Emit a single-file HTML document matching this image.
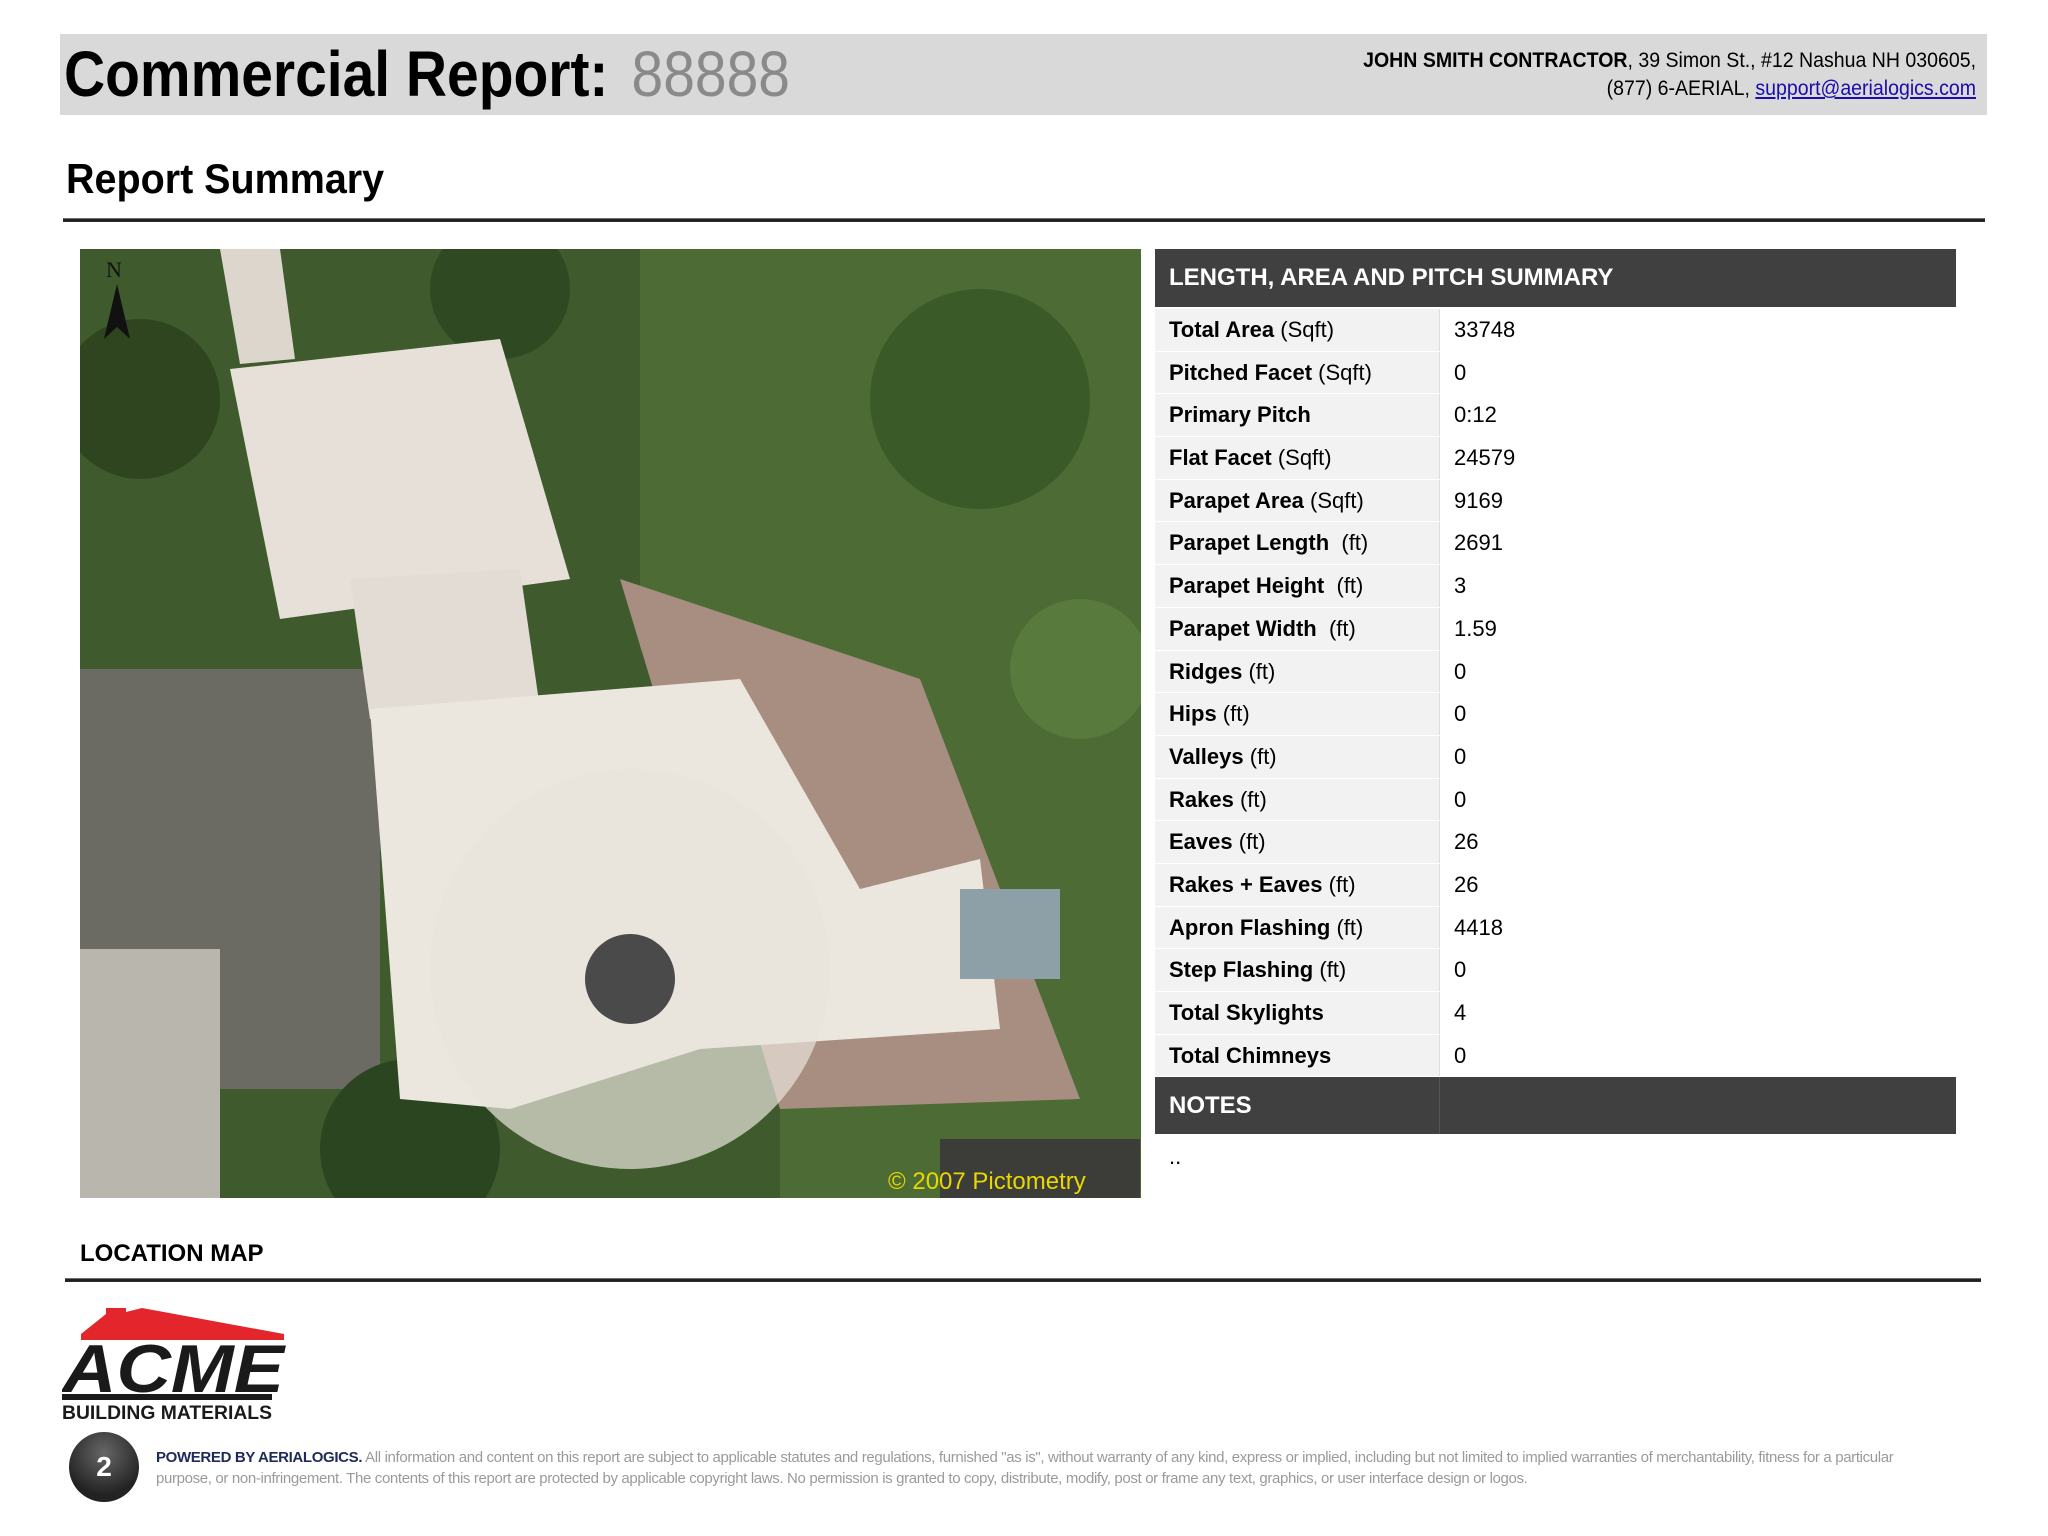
<!DOCTYPE html>
<html><head><meta charset="utf-8"><style>
*{margin:0;padding:0;box-sizing:border-box}
body{width:2048px;height:1536px;background:#fff;position:relative;font-family:"Liberation Sans",sans-serif;overflow:hidden;color:#000}
.abs{position:absolute}
#hdr{left:60px;top:34px;width:1927px;height:81px;background:#d9d9d9}
#title{left:64px;top:38px;font-size:64px;font-weight:bold;white-space:nowrap;line-height:72px;transform:scaleX(.89);transform-origin:0 0}
#title span{color:#8a8a8a;font-weight:normal;margin-left:26px}
#addr{right:72px;top:47px;text-align:right;font-size:21px;line-height:28px;white-space:nowrap;transform:scaleX(.93);transform-origin:100% 0}
#addr a{color:#1a0dab;text-decoration:underline}
#rs{left:66px;top:155px;font-size:42px;font-weight:bold;transform:scaleX(.94);transform-origin:0 0}
.rule{height:4px;background:linear-gradient(#999,#111 40%,#333)}
#tbl{left:1155px;top:249px;width:801px}
.th{background:#404040;color:#fff;height:58px;font-size:24px;line-height:58px;padding-left:14px;font-weight:bold}
.row{display:flex;height:42.7px;font-size:22px;line-height:42.7px;border-bottom:1px solid #fff}
.row .l{width:285px;background:#f2f2f2;padding-left:14px;border-right:1px solid #ddd}
.row .v{padding-left:14px}
.row b{font-weight:bold}
</style></head><body>
<div id="hdr" class="abs"></div>
<div id="title" class="abs">Commercial Report:<span>88888</span></div>
<div id="addr" class="abs"><b>JOHN SMITH CONTRACTOR</b>, 39 Simon St., #12 Nashua NH 030605,<br>(877) 6-AERIAL, <a>support@aerialogics.com</a></div>
<div id="rs" class="abs">Report Summary</div>
<div class="abs rule" style="left:63px;top:218px;width:1922px"></div>

<svg class="abs" style="left:80px;top:249px" width="1061" height="949" viewBox="0 0 1061 949">
<rect width="1061" height="949" fill="#3f5a2c"/>
<rect x="0" y="420" width="300" height="420" fill="#6b6a63"/>
<rect x="0" y="700" width="140" height="249" fill="#b9b6ae"/>
<path d="M560 0 L1061 0 L1061 949 L700 949 L700 600 L560 400 Z" fill="#4d6b35"/>
<circle cx="420" cy="40" r="70" fill="#2f4a22"/><circle cx="60" cy="150" r="80" fill="#2e4520"/>
<circle cx="900" cy="150" r="110" fill="#3a5a28"/><circle cx="700" cy="480" r="60" fill="#2f4d22"/>
<circle cx="330" cy="900" r="90" fill="#2b4520"/><circle cx="1000" cy="420" r="70" fill="#587a3c"/>
<path d="M540 330 L840 430 L1000 850 L700 860 Z" fill="#a88e80"/>
<path d="M150 120 L420 90 L490 330 L200 370 Z" fill="#e6e0d8"/>
<path d="M270 330 L440 320 L460 460 L290 470 Z" fill="#e2dcd4"/>
<path d="M290 460 L660 430 L780 640 L900 610 L920 780 L620 800 L430 860 L320 850 Z" fill="#ebe6de"/>
<path d="M140 0 L200 0 L215 110 L160 115 Z" fill="#ddd6cd"/>
<circle cx="550" cy="720" r="200" fill="#e9e4db" opacity=".7"/>
<circle cx="550" cy="730" r="45" fill="#4a4a4a"/>
<rect x="880" y="640" width="100" height="90" fill="#8da0a8"/>
<rect x="860" y="890" width="200" height="59" fill="#3c3c38"/>
<text x="808" y="940" font-family="Liberation Sans" font-size="24" fill="#e8d800">© 2007 Pictometry</text>
<text x="26" y="28" font-family="Liberation Serif" font-size="22" fill="#111">N</text>
<path d="M37 35 L50 90 L37 78 L24 90 Z" fill="#111"/>
</svg>

<div id="tbl" class="abs">
<div class="th">LENGTH, AREA AND PITCH SUMMARY</div>
<div style="height:2px"></div>
<div class="row"><div class="l"><b>Total Area</b> (Sqft)</div><div class="v">33748</div></div>
<div class="row"><div class="l"><b>Pitched Facet</b> (Sqft)</div><div class="v">0</div></div>
<div class="row"><div class="l"><b>Primary Pitch</b></div><div class="v">0:12</div></div>
<div class="row"><div class="l"><b>Flat Facet</b> (Sqft)</div><div class="v">24579</div></div>
<div class="row"><div class="l"><b>Parapet Area</b> (Sqft)</div><div class="v">9169</div></div>
<div class="row"><div class="l"><b>Parapet Length</b>&nbsp; (ft)</div><div class="v">2691</div></div>
<div class="row"><div class="l"><b>Parapet Height</b>&nbsp; (ft)</div><div class="v">3</div></div>
<div class="row"><div class="l"><b>Parapet Width</b>&nbsp; (ft)</div><div class="v">1.59</div></div>
<div class="row"><div class="l"><b>Ridges</b> (ft)</div><div class="v">0</div></div>
<div class="row"><div class="l"><b>Hips</b> (ft)</div><div class="v">0</div></div>
<div class="row"><div class="l"><b>Valleys</b> (ft)</div><div class="v">0</div></div>
<div class="row"><div class="l"><b>Rakes</b> (ft)</div><div class="v">0</div></div>
<div class="row"><div class="l"><b>Eaves</b> (ft)</div><div class="v">26</div></div>
<div class="row"><div class="l"><b>Rakes + Eaves</b> (ft)</div><div class="v">26</div></div>
<div class="row"><div class="l"><b>Apron Flashing</b> (ft)</div><div class="v">4418</div></div>
<div class="row"><div class="l"><b>Step Flashing</b> (ft)</div><div class="v">0</div></div>
<div class="row"><div class="l"><b>Total Skylights</b></div><div class="v">4</div></div>
<div class="row"><div class="l"><b>Total Chimneys</b></div><div class="v">0</div></div>
<div class="th" style="height:57px;line-height:57px;display:flex;padding-left:0"><div style="width:285px;padding-left:14px;border-right:1px solid #555">NOTES</div></div>
<div style="font-size:22px;padding:10px 14px">..</div>
</div>

<div class="abs" style="left:80px;top:1240px;font-size:24px;font-weight:bold">LOCATION MAP</div>
<div class="abs rule" style="left:65px;top:1278px;width:1916px"></div>

<svg class="abs" style="left:62px;top:1308px" width="225" height="112" viewBox="0 0 225 112">
<path d="M44 6 L44 0 L64 0 L64 4 L80 0 L222 26 L222 32 L19 32 L19 26 Z" fill="#e2262b"/>
<text x="0" y="84" font-family="Liberation Sans" font-weight="bold" font-style="italic" font-size="68" fill="#1a1a1a" textLength="222" lengthAdjust="spacingAndGlyphs">ACME</text>
<rect x="0" y="86" width="210" height="6" fill="#1a1a1a"/>
<text x="0" y="111" font-family="Liberation Sans" font-weight="bold" font-size="19" fill="#1a1a1a" textLength="210" lengthAdjust="spacingAndGlyphs">BUILDING MATERIALS</text>
</svg>

<div class="abs" style="left:69px;top:1432px;width:70px;height:70px;border-radius:50%;background:radial-gradient(circle at 50% 30%,#666,#222 70%);color:#fff;font-size:28px;font-weight:bold;text-align:center;line-height:70px">2</div>
<div class="abs" style="left:156px;top:1447px;width:1780px;font-size:15px;line-height:21px;color:#9a9a9a;letter-spacing:-0.35px"><b style="color:#1e2a5a">POWERED BY AERIALOGICS.</b> All information and content on this report are subject to applicable statutes and regulations, furnished "as is", without warranty of any kind, express or implied, including but not limited to implied warranties of merchantability, fitness for a particular purpose, or non-infringement. The contents of this report are protected by applicable copyright laws. No permission is granted to copy, distribute, modify, post or frame any text, graphics, or user interface design or logos.</div>
</body></html>
